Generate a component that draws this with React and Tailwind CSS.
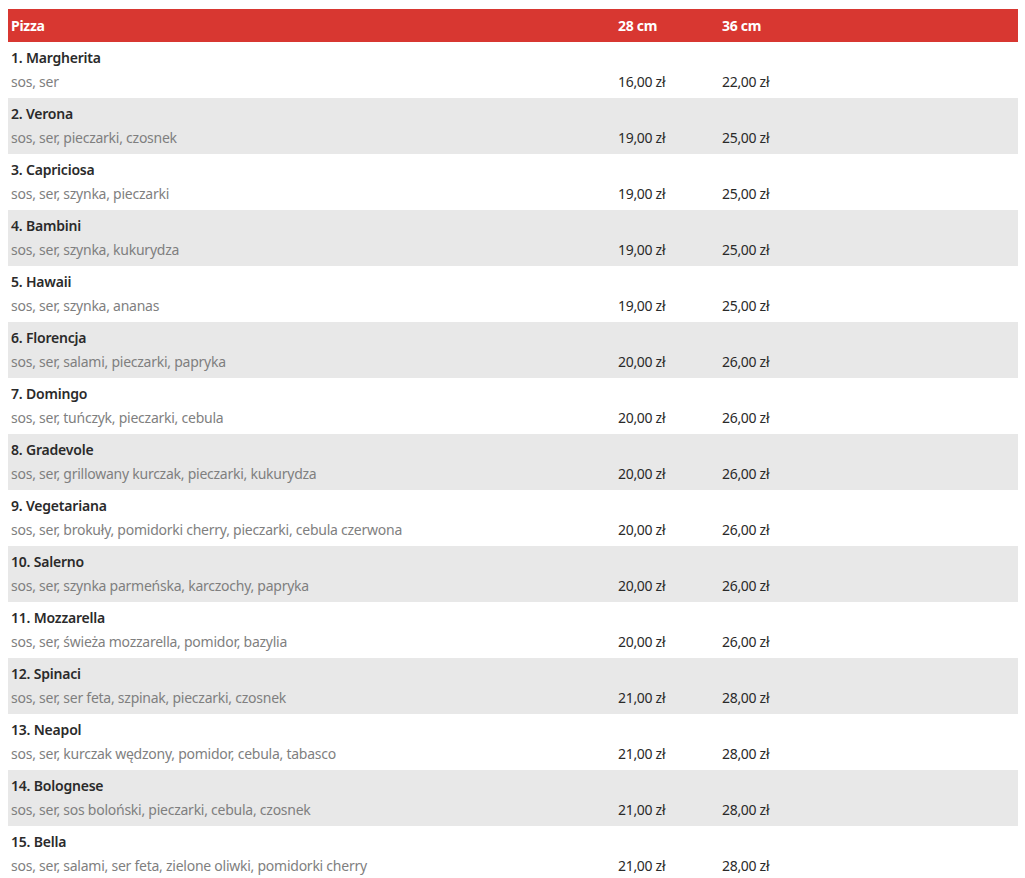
import React from "react";

const items = [
  ["1. Margherita", "sos, ser", "16,00 zł", "22,00 zł"],
  ["2. Verona", "sos, ser, pieczarki, czosnek", "19,00 zł", "25,00 zł"],
  ["3. Capriciosa", "sos, ser, szynka, pieczarki", "19,00 zł", "25,00 zł"],
  ["4. Bambini", "sos, ser, szynka, kukurydza", "19,00 zł", "25,00 zł"],
  ["5. Hawaii", "sos, ser, szynka, ananas", "19,00 zł", "25,00 zł"],
  ["6. Florencja", "sos, ser, salami, pieczarki, papryka", "20,00 zł", "26,00 zł"],
  ["7. Domingo", "sos, ser, tuńczyk, pieczarki, cebula", "20,00 zł", "26,00 zł"],
  ["8. Gradevole", "sos, ser, grillowany kurczak, pieczarki, kukurydza", "20,00 zł", "26,00 zł"],
  ["9. Vegetariana", "sos, ser, brokuły, pomidorki cherry, pieczarki, cebula czerwona", "20,00 zł", "26,00 zł"],
  ["10. Salerno", "sos, ser, szynka parmeńska, karczochy, papryka", "20,00 zł", "26,00 zł"],
  ["11. Mozzarella", "sos, ser, świeża mozzarella, pomidor, bazylia", "20,00 zł", "26,00 zł"],
  ["12. Spinaci", "sos, ser, ser feta, szpinak, pieczarki, czosnek", "21,00 zł", "28,00 zł"],
  ["13. Neapol", "sos, ser, kurczak wędzony, pomidor, cebula, tabasco", "21,00 zł", "28,00 zł"],
  ["14. Bolognese", "sos, ser, sos boloński, pieczarki, cebula, czosnek", "21,00 zł", "28,00 zł"],
  ["15. Bella", "sos, ser, salami, ser feta, zielone oliwki, pomidorki cherry", "21,00 zł", "28,00 zł"],
];

export default function App() {
  return (
    <div
      className="bg-white pt-[9px] pl-[8px] pr-[7px]"
      style={{ fontFamily: '"Noto Sans", "Open Sans", sans-serif' }}
    >
      <div className="grid grid-cols-[607px_104px_1fr] h-[33px] items-center bg-[#d83731] text-white font-bold text-[14px] tracking-[-0.3px]">
        <div className="pl-[3px]">Pizza</div>
        <div className="pl-[3px]">28 cm</div>
        <div className="pl-[3px]">36 cm</div>
      </div>
      {items.map(([name, desc, p1, p2], i) => (
        <div
          key={i}
          className={`grid grid-cols-[607px_104px_1fr] h-[56px] ${i % 2 === 1 ? "bg-[#e8e8e8]" : "bg-white"}`}
        >
          <div className="pl-[3px] flex flex-col justify-center">
            <div className="text-[14px] font-semibold text-[#2a2a2a] leading-[24px] tracking-[-0.2px]">{name}</div>
            <div className="text-[14px] text-[#7f7f7f] leading-[24px] tracking-[-0.25px]">{desc}</div>
          </div>
          <div className="pl-[3px] flex items-end pb-[4px] text-[14px] text-[#2a2a2a] leading-[24px] tracking-[-0.3px]">{p1}</div>
          <div className="pl-[3px] flex items-end pb-[4px] text-[14px] text-[#2a2a2a] leading-[24px] tracking-[-0.3px]">{p2}</div>
        </div>
      ))}
    </div>
  );
}
